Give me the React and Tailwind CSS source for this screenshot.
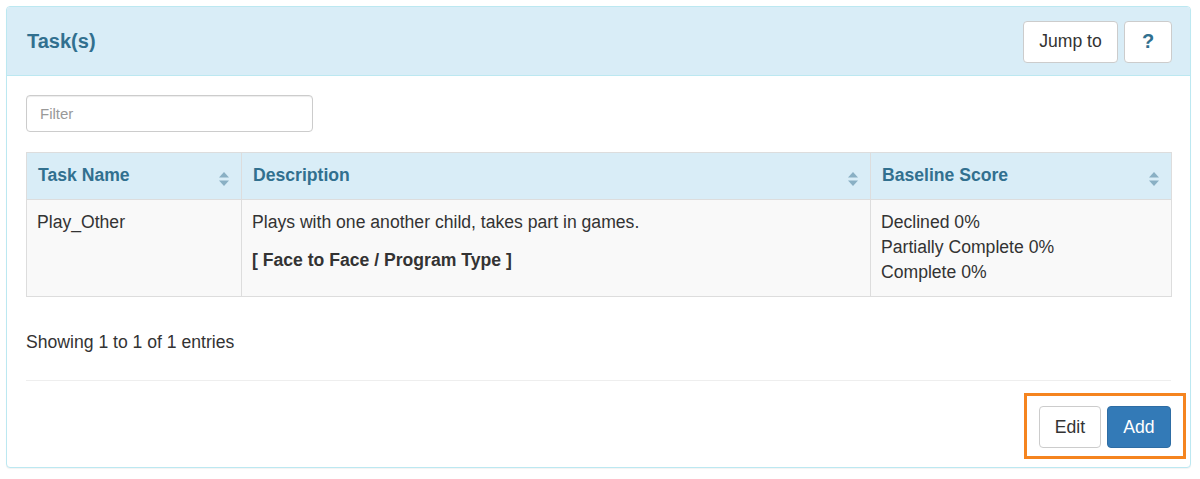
const SortIcon = function () {
    return (
        <svg width="12" height="16" viewBox="0 0 12 16" className="shrink-0">
            <path d="M6 1 L11 6.5 L1 6.5 Z" fill="#8ab0c4"/>
            <path d="M6 15 L11 9.5 L1 9.5 Z" fill="#8ab0c4"/>
        </svg>
    );
};

const HeadCell = function ({label, width}) {
    return (
        <th className={`${width} border border-[#dddddd] px-[11px] pt-[10px] pb-[11px] text-left align-middle`}>
            <div className="flex items-center justify-between">
                <span className="font-bold text-[#31708f]">{label}</span>
                <span className="mt-[7px]"><SortIcon/></span>
            </div>
        </th>
    );
};

const App = function () {
    return (
        <div className="w-[1200px] h-[479px] bg-white pl-[6px] pt-[6px] font-['Liberation_Sans',Arial,sans-serif] text-[17.6px] leading-[25px] text-[#333333]">
            <div className="w-[1185px] h-[462px] rounded-[4px] border border-[#bce8f1] bg-white shadow-[0_1px_1px_rgba(0,0,0,0.05)] flex flex-col">
                <div className="h-[69px] shrink-0 bg-[#d9edf7] border-b border-[#bce8f1] rounded-t-[3px] pl-[20px] pr-[18px] flex items-center justify-between">
                    <h3 className="text-[20px] font-bold text-[#31708f] mt-[1px]">Task(s)</h3>
                    <div className="flex gap-[6px] mt-[1px]">
                        <button className="h-[42px] w-[95px] bg-white border border-[#cccccc] rounded-[4px] text-[#333333] text-[17.6px]">Jump to</button>
                        <button className="h-[42px] w-[48px] bg-white border border-[#cccccc] rounded-[4px] text-[#31708f] text-[20px] font-bold">?</button>
                    </div>
                </div>
                <div className="px-[19px] pt-[19px] flex flex-col flex-1">
                    <input
                        type="text"
                        placeholder="Filter"
                        className="w-[287px] h-[37px] border border-[#cccccc] rounded-[4px] px-[13px] text-[15px] placeholder:text-[#999999] shadow-[inset_0_1px_1px_rgba(0,0,0,0.075)] outline-none"/>
                    <table className="mt-[20px] w-[1145px] border-collapse table-fixed">
                        <thead className="bg-[#d9edf7]">
                            <tr>
                                <HeadCell label="Task Name" width="w-[215px]"/>
                                <HeadCell label="Description" width="w-[629px]"/>
                                <HeadCell label="Baseline Score" width="w-[301px]"/>
                            </tr>
                        </thead>
                        <tbody className="bg-[#f9f9f9]">
                            <tr>
                                <td className="border border-[#dddddd] px-[10px] pt-[10px] pb-[11px] align-top">Play_Other</td>
                                <td className="border border-[#dddddd] px-[10px] pt-[10px] pb-[11px] align-top">
                                    <p className="mb-[13px]">Plays with one another child, takes part in games.</p>
                                    <p className="font-bold">[ Face to Face / Program Type ]</p>
                                </td>
                                <td className="border border-[#dddddd] px-[10px] pt-[10px] pb-[11px] align-top">
                                    <div>Declined 0%</div>
                                    <div>Partially Complete 0%</div>
                                    <div>Complete 0%</div>
                                </td>
                            </tr>
                        </tbody>
                    </table>
                    <div className="mt-[33px]">Showing 1 to 1 of 1 entries</div>
                    <hr className="mt-[25px] w-[1145px] border-t border-[#eeeeee]"/>
                    <div className="flex justify-end w-[1145px] mt-[25px]">
                        <div className="relative flex gap-[6px]">
                            <div className="absolute -left-[15px] -right-[15px] -top-[13px] -bottom-[11px] border-[3px] border-[#f5841f]"/>
                            <button className="h-[42px] w-[62px] bg-white border border-[#cccccc] rounded-[4px] text-[#333333]">Edit</button>
                            <button className="h-[42px] w-[64px] bg-[#337ab7] border border-[#2e6da4] rounded-[4px] text-white">Add</button>
                        </div>
                    </div>
                </div>
            </div>
        </div>
    );
};

export default App;
